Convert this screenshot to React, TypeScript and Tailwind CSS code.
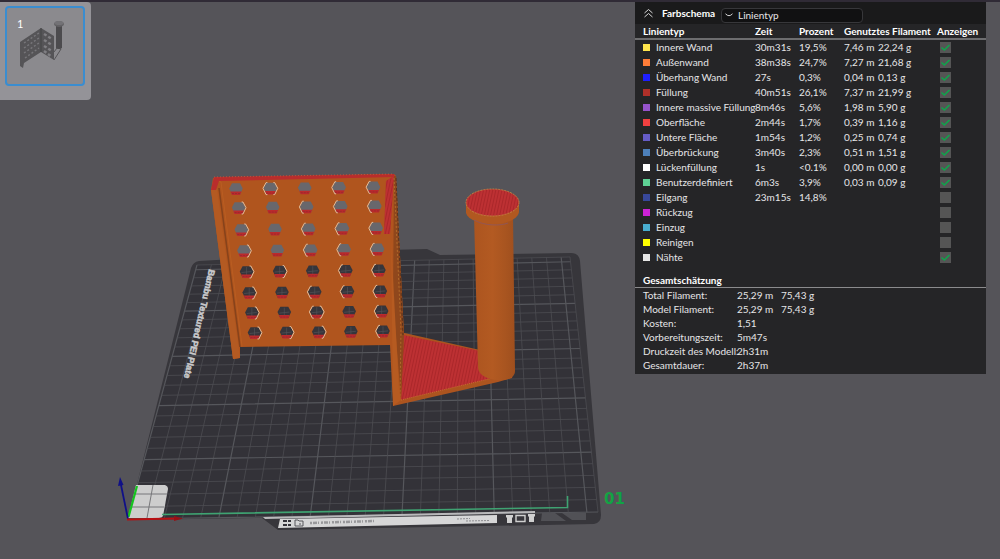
import { useState } from 'react';

type LineType = {
  label: string;
  color: string;
  time?: string;
  percent?: string;
  length?: string;
  weight?: string;
  visible: boolean;
};

const LINE_TYPES: LineType[] = [
  { label: 'Innere Wand', color: '#ffe64d', time: '30m31s', percent: '19,5%', length: '7,46 m', weight: '22,24 g', visible: true },
  { label: 'Außenwand', color: '#ff7d38', time: '38m38s', percent: '24,7%', length: '7,27 m', weight: '21,68 g', visible: true },
  { label: 'Überhang Wand', color: '#1f1fff', time: '27s', percent: '0,3%', length: '0,04 m', weight: '0,13 g', visible: true },
  { label: 'Füllung', color: '#b03029', time: '40m51s', percent: '26,1%', length: '7,37 m', weight: '21,99 g', visible: true },
  { label: 'Innere massive Füllung', color: '#9654cc', time: '8m46s', percent: '5,6%', length: '1,98 m', weight: '5,90 g', visible: true },
  { label: 'Oberfläche', color: '#f04040', time: '2m44s', percent: '1,7%', length: '0,39 m', weight: '1,16 g', visible: true },
  { label: 'Untere Fläche', color: '#665cc7', time: '1m54s', percent: '1,2%', length: '0,25 m', weight: '0,74 g', visible: true },
  { label: 'Überbrückung', color: '#4d80ba', time: '3m40s', percent: '2,3%', length: '0,51 m', weight: '1,51 g', visible: true },
  { label: 'Lückenfüllung', color: '#ffffff', time: '1s', percent: '<0.1%', length: '0,00 m', weight: '0,00 g', visible: true },
  { label: 'Benutzerdefiniert', color: '#5ed194', time: '6m3s', percent: '3,9%', length: '0,03 m', weight: '0,09 g', visible: true },
  { label: 'Eilgang', color: '#38489b', time: '23m15s', percent: '14,8%', visible: false },
  { label: 'Rückzug', color: '#cd22d6', visible: false },
  { label: 'Einzug', color: '#49adcf', visible: false },
  { label: 'Reinigen', color: '#ffff00', visible: false },
  { label: 'Nähte', color: '#e6e6e6', visible: true },
];

const TOTALS = [
  { label: 'Total Filament:', value: '25,29 m', extra: '75,43 g' },
  { label: 'Model Filament:', value: '25,29 m', extra: '75,43 g' },
  { label: 'Kosten:', value: '1,51' },
  { label: 'Vorbereitungszeit:', value: '5m47s' },
  { label: 'Druckzeit des Modell:', value: '2h31m' },
  { label: 'Gesamtdauer:', value: '2h37m' },
];

// Bed corners on screen: front left, front right, back right, back left
const BED = [
  [128, 519],
  [598, 512],
  [570, 257],
  [197, 265],
];
const BED_SIZE = 256;

// Maps a bed position in mm to the perspective view
function project(xMm: number, yMm: number) {
  const [[x0, y0], [x1, y1], [x2, y2], [x3, y3]] = BED;
  const u = xMm / BED_SIZE;
  const v = yMm / BED_SIZE;
  const dx1 = x1 - x2;
  const dx2 = x3 - x2;
  const dy1 = y1 - y2;
  const dy2 = y3 - y2;
  const sx = x0 - x1 + x2 - x3;
  const sy = y0 - y1 + y2 - y3;
  const det = dx1 * dy2 - dx2 * dy1;
  const g = (sx * dy2 - dx2 * sy) / det;
  const h = (dx1 * sy - sx * dy1) / det;
  const w = g * u + h * v + 1;
  return [
    ((x1 - x0 + g * x1) * u + (x3 - x0 + h * x3) * v + x0) / w,
    ((y1 - y0 + g * y1) * u + (y3 - y0 + h * y3) * v + y0) / w,
  ];
}

const TICKS = [...Array.from({ length: 26 }, (_, i) => i * 10), BED_SIZE];

// Visible seam per hole: L = left, R = right, B = both, N = none
const SEAMS = ['NBNLL', 'RNLLL', 'RNLLL', 'RNLLL', 'RRNLL', 'RNLLL', 'RNBNL', 'RRRNL'];
const HOLE_ROWS = [189, 208, 230, 251, 272, 293, 313, 333];

function BedGrid() {
  return (
    <g fill="none">
      {TICKS.map((t) => {
        const [ax, ay] = project(t, 0);
        const [bx, by] = project(t, BED_SIZE);
        const [cx, cy] = project(0, t);
        const [dx, dy] = project(BED_SIZE, t);
        const major = t % 50 === 0;
        return (
          <path
            key={t}
            d={`M${ax} ${ay}L${bx} ${by}M${cx} ${cy}L${dx} ${dy}`}
            stroke={major ? '#56575c' : '#4c4d52'}
            strokeWidth={major ? 1.2 : 0.8}
          />
        );
      })}
    </g>
  );
}

function Hole({ row, col }: { row: number; col: number }) {
  const left = 236 + (row * 18.5) / 7;
  const right = 373.5 + (row * 9.5) / 7;
  const x = left + ((right - left) * col) / 4;
  const y = HOLE_ROWS[row] - col * 0.4;
  const seam = SEAMS[row][col];
  const above = row < 4;
  return (
    <g transform={`translate(${x} ${y})`}>
      <path d="M-6.800 -0.500L-4 -5.800H4L6.800 -0.500L4 5.500H-4Z" fill={above ? '#68676c' : '#36353b'} />
      {!above && <path d="M-5 0.500L5 -0.500M0 -5V3" stroke="#55555b" strokeWidth="0.6" />}
      <path d="M-5.500 2.500H5.500L4 6H-4Z" fill="#bb2a2c" />
      <path d="M-4 4.500H4" stroke="#8a2830" strokeWidth="0.6" strokeDasharray="2 1" />
      {(seam === 'L' || seam === 'B') && (
        <path d="M-3 -6H-4.300L-7.400 -0.300L-4.300 6H-3" fill="none" stroke="#e0bd9d" strokeWidth="1" />
      )}
      {(seam === 'R' || seam === 'B') && (
        <path d="M3 -6H4.300L7.400 -0.300L4.300 6H3" fill="none" stroke="#e0bd9d" strokeWidth="1" />
      )}
    </g>
  );
}

function Model() {
  return (
    <g>
      {/* base with solid infill */}
      <path d="M393 406L400 332L480 350L514 370L512 378L498 382Z" fill="#ac541f" />
      <path d="M403 335L480 351V372L497 377L401 400Z" fill="#ab272a" />
      <path d="M403 335L480 351V372L497 377L401 400Z" fill="url(#infill)" />
      <path d="M401 400L497 377" stroke="#c97a32" strokeWidth="0.8" strokeDasharray="1 1" />

      {/* post */}
      <path d="M474 215H513L515 371C515 377 509 380 499 380C488 380 478 375 478 367Z" fill="url(#post)" />
      <path d="M466 203V213C468 220 480 224 493 224C507 224 518 219 519 212V203Z" fill="#b15820" />
      <path d="M474 220C484 226 501 226 508 223" fill="none" stroke="#8b5560" strokeWidth="0.8" />
      <ellipse cx="492.5" cy="202.5" rx="26.5" ry="13.5" fill="#ab272a" />
      <ellipse cx="492.5" cy="202.5" rx="26.5" ry="13.5" fill="url(#infill)" stroke="#c58a45" strokeWidth="0.9" strokeDasharray="2 1" />

      {/* perforated wall */}
      <path d="M213 178L394 174L396 176L404 335L401 400L393 406L390 345L240 347V358L233 359L211 190Z" fill="#b0551e" />
      <path d="M211 190L217 189L240 358L233 359Z" fill="#b35a22" />
      <path d="M219 188L240 347" stroke="#87431b" strokeWidth="1.6" />
      <path d="M217 181L221 182L242 346" fill="none" stroke="#bd6124" strokeWidth="0.7" />
      <path d="M214 177L394 174L395 177L219 181L216 190L211 190Z" fill="#b92d2c" />
      <path d="M214 177L394 174" stroke="#c8603c" strokeWidth="0.7" strokeDasharray="1 2" />
      <path d="M386 181L394 176L390 234H384Z" fill="#ab272a" />
      <path d="M386 181L394 176L390 234H384Z" fill="url(#infill)" />
      {HOLE_ROWS.map((_, row) => [0, 1, 2, 3, 4].map((col) => <Hole key={`${row}-${col}`} row={row} col={col} />))}
      <path d="M394 176L396 176L404 335L401 400L393 300Z" fill="#8f471c" />
      <path d="M394 178L401 330L400 398" fill="none" stroke="#b06a2a" strokeWidth="1" strokeDasharray="2 2" />
      <path d="M396 178L403 335" fill="none" stroke="#57331d" strokeWidth="1" strokeDasharray="3 2" />
      <path d="M391 240L399 390L401 400L393 406Z" fill="#b65b21" />
    </g>
  );
}

function Scene() {
  return (
    <svg
      viewBox="0 0 1000 559"
      preserveAspectRatio="xMinYMin meet"
      className="absolute inset-0 h-full w-full"
      role="img"
      aria-label="Druckplatte 01"
    >
      <defs>
        <pattern id="infill" width="3" height="2" patternUnits="userSpaceOnUse" patternTransform="rotate(12)">
          <path d="M0 1H2" stroke="#d23c3d" strokeWidth="0.9" />
        </pattern>
        <linearGradient id="post" x1="0" x2="1" y1="0" y2="0">
          <stop offset="0" stopColor="#ac551f" />
          <stop offset="0.45" stopColor="#b35a22" />
          <stop offset="0.75" stopColor="#a95520" />
          <stop offset="1" stopColor="#9f4f1e" />
        </linearGradient>
      </defs>

      <path
        d="M128 520L191 268Q193 262 199 261L388 250L427 249L440 255L571 253Q579 253 580 261L601 515Q601 523 594 524L278 530L262 518Z"
        fill="#37363b"
      />
      <path d="M128 519L197 265L570 257L598 512Z" fill="#333238" />
      <BedGrid />

      <text
        transform="translate(209 269) rotate(103)"
        fontFamily="'Liberation Sans', sans-serif"
        fontSize="9"
        fontWeight="700"
        fill="#c9c9cb"
        stroke="#c9c9cb"
        strokeWidth="0.5"
      >
        Bambu Textured PEI Plate
      </text>

      {/* origin tab */}
      <path d="M136 485H165Q168 486 168 489L163 516Q162 518 159 518H128Z" fill="#cdcdcd" />
      <path d="M153 485L147 518M134 494L167 494M131 507L164 507" stroke="#77777a" strokeWidth="1" />

      {/* front edge of the plate */}
      <path d="M263 517L535 511V513L265 519Z" fill="#b9b9bb" />
      <path d="M280 519L497 515V523L278 528Z" fill="#d6d6d7" />
      <path d="M283 520h4v2h-4zM288 520h3v2h-3zM283 524h4v2h-4zM288 524h3v2h-3z" fill="#333238" />
      <path d="M295 520h3l1 1h4v5h-8zM299 524h2" fill="none" stroke="#4a4a4e" strokeWidth="0.9" />
      <path d="M310 523L375 521" stroke="#98989b" strokeWidth="2.5" strokeDasharray="2 1 4 1 1 2" />
      <path d="M457 519L470 518.500M466 521L490 520.500" stroke="#8e8e91" strokeWidth="1" strokeDasharray="2 1" />
      <path d="M506 515h7v2l-1 1v5h-5v-5l-1 -1zM528 514h7v2l-1 1v5h-5v-5l-1 -1z" fill="#d0d0d0" />
      <path d="M516 515.500H525V521.500H516Z" fill="none" stroke="#d0d0d0" strokeWidth="1.4" />
      <path d="M542 513H555L566 521H541ZM562 513H586V520H572Z" fill="#515156" />

      {/* skirt line and axes */}
      <path d="M162 514.500L567.500 507.500V496" fill="none" stroke="#3fa372" strokeWidth="1.6" />
      <path d="M128.500 517L137 486" stroke="#15c41f" strokeWidth="2.2" />
      <path d="M128 519L121 485" stroke="#101088" strokeWidth="1.8" />
      <path d="M120 477L118 486L123.500 485Z" fill="#101088" />
      <path d="M127 519.500L176 518.500" stroke="#b80f12" strokeWidth="2" />
      <path d="M174 516L183 518.500L174 521Z" fill="#961116" />

      <text x="604" y="504" fontFamily="'DejaVu Sans', sans-serif" fontSize="15" fontWeight="700" fill="#12a344">
        01
      </text>

      <Model />
    </svg>
  );
}

function PlateThumbnail() {
  return (
    <aside className="h-[98px] rounded-r-sm bg-[#949398] pl-[5px] pr-[6px] pt-1">
      <button
        type="button"
        aria-label="Druckplatte 1"
        className="relative block size-20 rounded-sm border-2 border-[#3a8dd0] bg-[#8b8a8e]"
      >
        <span className="absolute left-2.5 top-2 text-[11px] leading-4 text-white">1</span>
        <svg viewBox="7 8 76 76" className="size-full" aria-hidden="true">
          <path d="M20 42L41 28L54 36V60L41 52L24 63L23 68L20 66Z" fill="#555457" />
          <path d="M41 28V52" stroke="#454447" strokeWidth="1" />
          <path d="M24 43L39 33M24 48L39 38M24 53L39 43M25 58L39 48" stroke="#77767a" strokeWidth="1.4" strokeDasharray="2 2" />
          <path d="M44 34L52 39M44 40L52 45M44 46L52 51M44 51L52 57" stroke="#807f83" strokeWidth="2.4" strokeDasharray="3 2" />
          <path d="M54 60L61 49L57 48L54 52" fill="none" stroke="#555457" strokeWidth="1" />
          <path d="M56 25H62V48Q59 50 56 48Z" fill="#4c4b4e" />
          <ellipse cx="59" cy="24" rx="5" ry="3" fill="#626164" />
          <ellipse cx="59" cy="23" rx="4.500" ry="2" fill="#737276" />
        </svg>
      </button>
    </aside>
  );
}

function LegendRow({ item }: { item: LineType }) {
  const [visible, setVisible] = useState(item.visible);
  const id = `show-${item.label.toLowerCase().replaceAll(' ', '-')}`;

  return (
    <tr className="h-[15px]">
      <td className="p-0 pl-2">
        <label htmlFor={id} className="flex items-center gap-1.5 whitespace-nowrap">
          <span className="size-[7px] shrink-0" style={{ backgroundColor: item.color }} />
          {item.label}
        </label>
      </td>
      <td className="p-0">{item.time}</td>
      <td className="p-0">{item.percent}</td>
      <td className="p-0">
        <span className="flex whitespace-nowrap">
          <span className="w-[34px] shrink-0">{item.length}</span>
          <span>{item.weight}</span>
        </span>
      </td>
      <td className="p-0 pl-[3px]">
        <span className="grid size-[11px]">
          <input
            id={id}
            type="checkbox"
            checked={visible}
            onChange={(e) => setVisible(e.target.checked)}
            className="col-start-1 row-start-1 size-[11px] appearance-none bg-[#555555]"
          />
          {visible && (
            <svg viewBox="0 0 11 11" className="pointer-events-none col-start-1 row-start-1 size-[11px]" aria-hidden="true">
              <path d="M1.500 5.500L4.300 8L9.500 3" fill="none" stroke="#0ea64b" strokeWidth="1.5" />
            </svg>
          )}
        </span>
      </td>
    </tr>
  );
}

function LegendPanel() {
  return (
    <section className="mr-3.5 w-[351px] max-w-full bg-[#252527] pb-0.5 text-[10px] leading-[15px] text-[#e6e6e7]">
      <header className="flex h-[22px] items-center bg-[#1a1a1b] pl-2">
        <button type="button" aria-label="Einklappen" className="mr-2 size-[11px]">
          <svg viewBox="0 0 11 11" className="size-full" fill="none" stroke="#d8d8d8" strokeWidth="1">
            <path d="M1.500 5L5.500 1.500L9.500 5M1.500 9L5.500 5.500L9.500 9" />
          </svg>
        </button>
        <label htmlFor="scheme" className="w-[59px] font-bold text-white">
          Farbschema
        </label>
        <span className="mt-1 grid">
          <select
            id="scheme"
            defaultValue="line"
            className="col-start-1 row-start-1 h-[15px] w-[142px] appearance-none rounded-sm border border-[#37373a] bg-[#111112] pl-4 text-[10px] leading-3 text-[#e6e6e7]"
          >
            <option value="line">Linientyp</option>
          </select>
          <svg
            viewBox="0 0 8 4"
            className="pointer-events-none col-start-1 row-start-1 ml-1 h-1 w-2 self-center"
            fill="none"
            stroke="#d8d8d8"
            strokeWidth="1"
            aria-hidden="true"
          >
            <path d="M0.500 0.800Q4 4.600 7.500 0.800" />
          </svg>
        </span>
      </header>

      <table className="w-full table-fixed border-collapse text-left">
        <colgroup>
          <col className="w-[120px]" />
          <col className="w-11" />
          <col className="w-[45px]" />
          <col className="w-[93px]" />
          <col />
        </colgroup>
        <thead>
          <tr className="whitespace-nowrap border-b-2 border-[#6d6d6f] leading-[14px] text-white">
            <th className="p-0 pl-2">Linientyp</th>
            <th className="p-0">Zeit</th>
            <th className="p-0">Prozent</th>
            <th className="p-0">Genutztes Filament</th>
            <th className="p-0">Anzeigen</th>
          </tr>
        </thead>
        <tbody>
          {LINE_TYPES.map((item) => (
            <LegendRow key={item.label} item={item} />
          ))}
        </tbody>
      </table>

      <h2 className="mt-2 border-b border-[#8b8b8d] pl-2 font-bold leading-[14px] text-white">Gesamtschätzung</h2>
      <dl className="pl-2 leading-[14px]">
        {TOTALS.map((total) => (
          <div key={total.label} className="flex whitespace-nowrap">
            <dt className="w-[94px]">{total.label}</dt>
            <dd className="w-11">{total.value}</dd>
            {total.extra && <dd>{total.extra}</dd>}
          </div>
        ))}
      </dl>
    </section>
  );
}

export default function App() {
  return (
    <main className="relative min-h-screen overflow-hidden bg-[#555459] font-[family-name:Lato,'Noto_Sans',sans-serif]">
      <Scene />
      <div className="relative flex items-start justify-between border-t-2 border-[#302b36]">
        <PlateThumbnail />
        <LegendPanel />
      </div>
    </main>
  );
}
